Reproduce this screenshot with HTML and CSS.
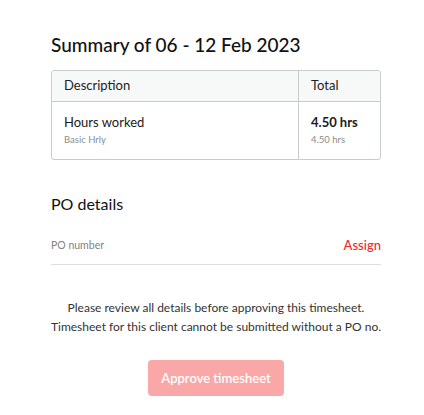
FILE: index.html
```html
<!DOCTYPE html>
<html>
<head>
<meta charset="utf-8">
<link rel="stylesheet" href="styles.css">
</head>
<body>
<div class="page">
  <h1 class="title">Summary of 06 - 12 Feb 2023</h1>
  <div class="table">
    <div class="row head">
      <div class="cell desc">Description</div>
      <div class="cell total">Total</div>
    </div>
    <div class="row body">
      <div class="cell desc">
        <div class="main">Hours worked</div>
        <div class="sub">Basic Hrly</div>
      </div>
      <div class="cell total">
        <div class="main bold">4.50 hrs</div>
        <div class="sub">4.50 hrs</div>
      </div>
    </div>
  </div>
  <h2 class="section">PO details</h2>
  <div class="po-row">
    <span class="po-label">PO number</span>
    <span class="po-assign">Assign</span>
  </div>
  <p class="note">Please review all details before approving this timesheet.<br>Timesheet for this client cannot be submitted without a PO no.</p>
  <div class="actions">
    <button class="approve">Approve timesheet</button>
  </div>
</div>
</body>
</html>
```

FILE: styles.css
```css
* { box-sizing: border-box; }
html, body { margin: 0; padding: 0; background: #fff; }
body { font-family: "Lato", "Noto Sans", sans-serif; color: #1f1f1f; }
.page { width: 330px; margin-left: 51px; padding-top: 33px; }
.title { font-size: 19px; font-weight: 500; margin: 0 0 13px; line-height: 24px; color: #111; }
.table { border: 1px solid #c9cccc; border-radius: 3px; overflow: hidden; }
.row { display: grid; grid-template-columns: 1fr 82px; }
.head { background: #f7f8f8; border-bottom: 1px solid #c9cccc; height: 31px; }
.head .cell { font-size: 13px; line-height: 29px; color: #222; }
.cell { padding-left: 12px; }
.cell.total { border-left: 1px solid #c9cccc; }
.body { height: 57px; }
.body .cell { padding-top: 11px; }
.main { font-size: 13px; line-height: 18px; color: #1a1a1a; }
.main.bold { font-weight: 700; }
.sub { font-size: 9.5px; line-height: 14px; color: #8a8d8e; margin-top: 2px; }
.section { font-size: 16px; font-weight: 400; margin: 33px 0 0; line-height: 22px; color: #111; }
.po-row { display: flex; justify-content: space-between; align-items: center; height: 50px; border-bottom: 1px solid #dedede; padding-top: 10px; }
.po-label { font-size: 10.5px; color: #7f8384; }
.po-assign { font-size: 13px; color: #f2262b; font-weight: 500; }
.note { text-align: center; font-size: 12px; line-height: 19px; color: #333; margin: 33px -25px 0; }
.actions { display: flex; justify-content: center; margin-top: 24px; }
.approve { width: 136px; height: 36px; border: none; border-radius: 4px; background: #f9a7a7; color: #fff; font-family: inherit; font-size: 13px; font-weight: 600; margin-left: 0; }
```
